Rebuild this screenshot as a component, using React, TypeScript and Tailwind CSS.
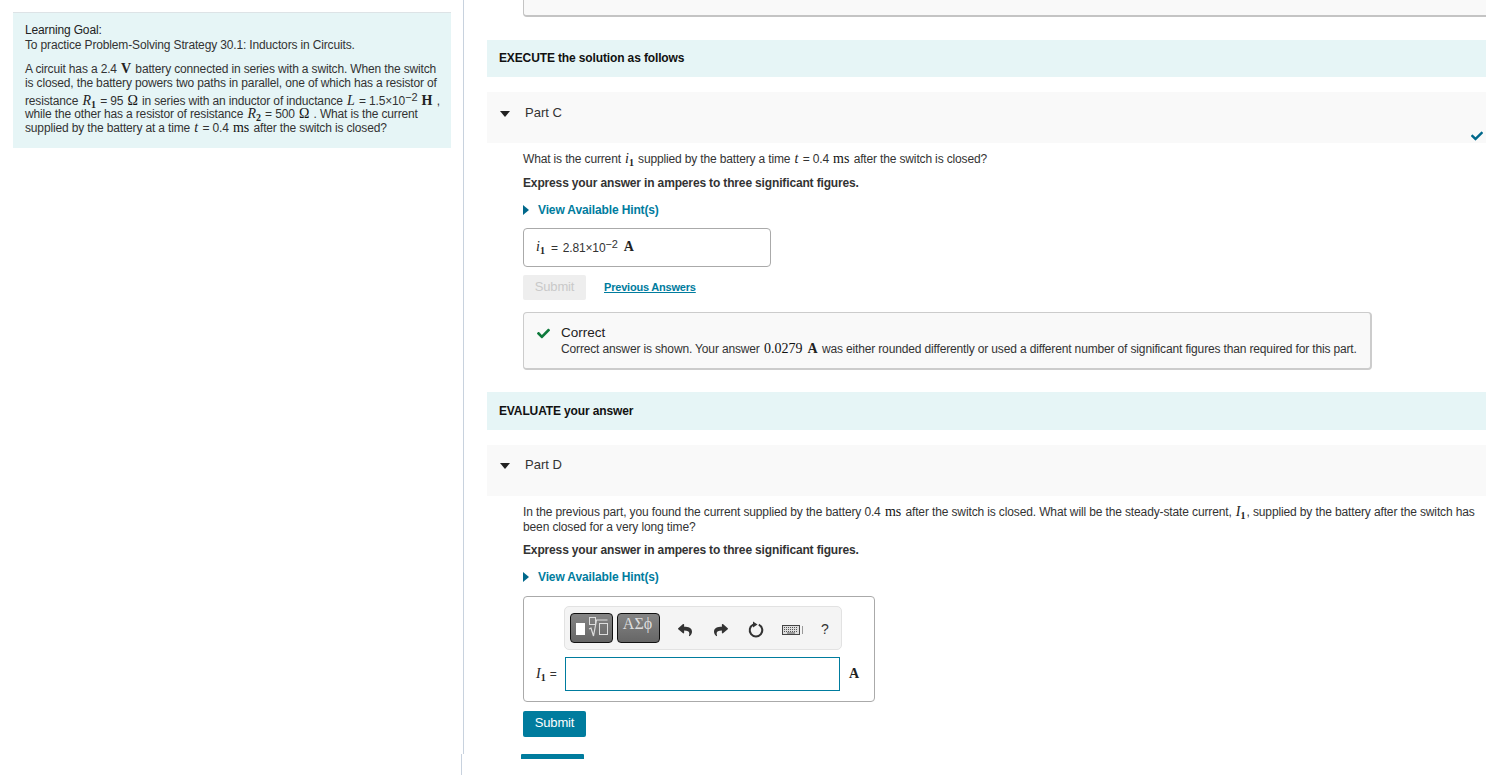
import React from 'react';
import { FaCheck, FaReply, FaShare } from 'react-icons/fa';

const V: React.FC<{ children: React.ReactNode }> = ({ children }) => (
    <span className="mx-px font-['Liberation_Serif',serif] italic text-[14px] leading-none tracking-normal text-[#222]">{children}</span>
);

// bold unit letters (V, H, A)
const U: React.FC<{ children: React.ReactNode }> = ({ children }) => (
    <span className="mx-px font-['Liberation_Serif',serif] text-[14px] leading-none tracking-normal font-bold text-[#222]">{children}</span>
);

// lighter units and numbers (ms, Ω, 0.0279)
const R: React.FC<{ children: React.ReactNode }> = ({ children }) => (
    <span className="mx-px font-['Liberation_Serif',serif] text-[14px] leading-none tracking-normal text-[#111]">{children}</span>
);

const Sub: React.FC<{ children: React.ReactNode }> = ({ children }) => (
    <span className="font-['Liberation_Serif',serif] text-[10px] font-bold not-italic align-[-3px] leading-none">{children}</span>
);

const Sup: React.FC<{ children: React.ReactNode }> = ({ children }) => (
    <span className="text-[11px] align-[4px] leading-none">{children}</span>
);

const Band: React.FC<{ title: string; className: string }> = ({ title, className }) => (
    <div className={`flex items-center pl-3 bg-[#e6f5f6] text-[12px] tracking-[-0.13px] font-bold text-[#111] ${className}`}>{title}</div>
);

const PartHeader: React.FC<{ title: string; done?: boolean; className: string }> = ({ title, done, className }) => (
    <div className={`relative flex items-start h-[51px] bg-[#f9f9f9] pl-[13px] text-[#333] ${className}`}>
        <svg width="10" height="6" viewBox="0 0 10 6" className="mt-[7px] mr-[15px]">
            <path d="M0 0h10L5 6z" fill="#222" />
        </svg>
        <span className="text-[13px] tracking-normal leading-[17px]">{title}</span>
        {done && <FaCheck className="absolute right-[3px] bottom-[1px] w-3 h-3 text-[#00688b]" />}
    </div>
);

const Hint: React.FC<{ className: string }> = ({ className }) => (
    <div className={`flex items-center text-[12px] tracking-[-0.13px] leading-[14px] font-bold text-[#007c9e] ${className}`}>
        <svg width="6" height="10" viewBox="0 0 6 10" className="mr-[9px]">
            <path d="M0 0l6 5-6 5z" fill="#00688b" />
        </svg>
        View Available Hint(s)
    </div>
);

const KeyboardIcon = () => (
    <svg width="18" height="10" viewBox="0 0 18 10">
        <rect x="0.5" y="0.5" width="17" height="9" fill="#ddd" stroke="#444" />
        <path d="M2 2.5h14M2 4.5h14M2 6.5h14" stroke="#555" strokeWidth="1" strokeDasharray="1 1" />
        <path d="M5 8h8" stroke="#555" />
    </svg>
);

const TemplateIcon = () => (
    <svg width="43" height="30" viewBox="0 0 43 30">
        <rect x="5" y="9" width="9" height="12" fill="#fff" />
        <rect x="18.5" y="3.5" width="6" height="7" fill="none" stroke="#ddd" />
        <path d="M18 15l2-1 2.5 8 3-16h11" fill="none" stroke="#ddd" strokeWidth="1.2" />
        <rect x="28.5" y="9.5" width="8" height="11" fill="none" stroke="#ddd" />
    </svg>
);

const ResetIcon = () => (
    <svg width="16" height="17" viewBox="0 0 16 17">
        <path d="M10.8 3.6A6.3 6.3 0 1 1 5.2 3.6" fill="none" stroke="#333" strokeWidth="2" />
        <path d="M5 0.5l4.5 3L5 6.5z" fill="#333" />
    </svg>
);

export default function App() {
    return (
        <div className="flex h-[775px] w-[1486px] overflow-hidden bg-white font-['Liberation_Sans',Arial,sans-serif] text-[12px] tracking-[-0.15px] text-[#333]">
            <div className="flex flex-col w-[464px] shrink-0">
                <div className="h-[754px] border-r border-[#c8d2de] pt-3 pl-[13px] pr-3">
                    <div className="w-[438px] h-[136px] bg-[#e6f5f6] border-t border-[#dde3e6] pl-3 pt-[10px] leading-[14px]">
                        <div className="text-[#222] h-[15px]">Learning Goal:</div>
                        <div className="h-[14px]">To practice Problem-Solving Strategy 30.1: Inductors in Circuits.</div>
                        <div className="mt-[10px] h-[14px] whitespace-nowrap">A circuit has a 2.4 <U>V</U> battery connected in series with a switch. When the switch</div>
                        <div className="h-[14px] whitespace-nowrap">is closed, the battery powers two paths in parallel, one of which has a resistor of</div>
                        <div className="mt-[2px] h-[14px] whitespace-nowrap">resistance <V>R<Sub>1</Sub></V> = 95 <R>Ω</R> in series with an inductor of inductance <V>L</V> = 1.5×10<Sup>−2</Sup> <U>H</U> ,</div>
                        <div className="mt-px h-[14px] whitespace-nowrap">while the other has a resistor of resistance <V>R<Sub>2</Sub></V> = 500 <R>Ω</R> . What is the current</div>
                        <div className="h-[14px] whitespace-nowrap">supplied by the battery at a time <V>t</V> = 0.4 <R>ms</R> after the switch is closed?</div>
                    </div>
                </div>
                <div className="h-[21px] w-[462px] border-r border-[#c8d2de]" />
            </div>

            <div className="flex-1 min-w-0 pl-[23px]">
                <div className="ml-9 h-[17px] bg-[#f9f9f9] border-l border-b-2 border-[#c4c4c4] rounded-bl-[4px]" />
                <Band title="EXECUTE the solution as follows" className="mt-[23px] h-[37px] pb-[2px]" />
                <PartHeader title="Part C" done className="mt-[15px] pt-[12px]" />

                <div className="pl-9">
                    <p className="mt-[9px] leading-[14px]">What is the current <V>i<Sub>1</Sub></V> supplied by the battery a time <V>t</V> = 0.4 <R>ms</R> after the switch is closed?</p>
                    <p className="mt-2 leading-[14px] font-bold text-[#333]">Express your answer in amperes to three significant figures.</p>
                    <Hint className="mt-[13px]" />
                    <div className="mt-[11px] flex items-center w-[248px] h-[39px] border border-[#aaa] rounded-[4px] pl-[11px] bg-white">
                        <V>i<Sub>1</Sub></V>
                        <span className="ml-[5px]">=</span>
                        <span className="ml-[5px]">2.81×10<Sup>−2</Sup></span>
                        <span className="ml-[5px] -mt-[2px]"><U>A</U></span>
                    </div>
                    <div className="mt-2 flex items-center">
                        <div className="flex items-center justify-center w-[63px] h-[25px] pb-[2px] bg-[#eeeeee] rounded-[2px] text-[13px] text-[#c9c9c9]">Submit</div>
                        <a className="ml-[18px] text-[11px] tracking-[-0.2px] font-bold text-[#007c9e] underline">Previous Answers</a>
                    </div>
                    <div className="mt-3 w-[849px] h-[58px] flex bg-[#f9f9f9] border border-[#ccc] border-r-2 border-b-2 rounded-[4px] pl-[13px] pt-[12px]">
                        <FaCheck className="mt-[2px] w-[13px] h-[13px] text-[#0f7a3c]" />
                        <div className="ml-[11px]">
                            <div className="text-[13.5px] tracking-normal leading-[16px] text-[#222]">Correct</div>
                            <div className="text-[12px] leading-[16px] whitespace-nowrap">Correct answer is shown. Your answer <R>0.0279</R> <U>A</U> was either rounded differently or used a different number of significant figures than required for this part.</div>
                        </div>
                    </div>
                </div>

                <Band title="EVALUATE your answer" className="mt-[22px] h-[38px]" />
                <PartHeader title="Part D" className="mt-[15px] pt-[11px]" />

                <div className="pl-9">
                    <div className="mt-[9px] tracking-[-0.13px] leading-[15px]">
                        <div className="h-[15px] whitespace-nowrap">In the previous part, you found the current supplied by the battery 0.4 <R>ms</R> after the switch is closed. What will be the steady-state current, <V>I<Sub>1</Sub></V>, supplied by the battery after the switch has</div>
                        <div className="h-[15px] whitespace-nowrap">been closed for a very long time?</div>
                    </div>
                    <p className="mt-2 leading-[14px] font-bold">Express your answer in amperes to three significant figures.</p>
                    <Hint className="mt-[13px]" />
                    <div className="mt-[12px] w-[352px] h-[106px] border border-[#aaa] rounded-[4px] px-[11px] pt-[9px]">
                        <div className="ml-[29px] w-[278px] h-[44px] flex items-center bg-[#f4f4f4] border border-[#e2e2e2] rounded-[5px] pl-[5px]">
                            <button className="w-[43px] h-[30px] rounded-[4px] border border-[#111] bg-linear-to-b from-[#858585] to-[#666] overflow-hidden"><TemplateIcon /></button>
                            <button className="ml-1 w-[43px] h-[30px] pb-[8px] pr-[2px] rounded-[4px] border border-[#111] bg-linear-to-b from-[#858585] to-[#666] font-['Liberation_Serif',serif] text-[16px] tracking-normal leading-[20px] text-[#ddd]">ΑΣϕ</button>
                            <FaReply className="ml-[18px] mt-[3px] w-[14px] h-[14px] text-[#333]" />
                            <FaShare className="ml-[22px] mt-[3px] w-[14px] h-[14px] text-[#333]" />
                            <span className="ml-[20px] mt-[3px] flex items-center"><ResetIcon /></span>
                            <span className="ml-[18px] mt-[3px] flex items-center"><KeyboardIcon /></span>
                            <span className="ml-[2px] mt-[3px] h-[8px] w-px bg-[#999]" />
                            <span className="ml-[18px] mt-[3px] text-[14px] text-[#333]">?</span>
                        </div>
                        <div className="mt-[7px] flex items-center">
                            <span className="w-[30px] shrink-0 whitespace-nowrap"><V>I<Sub>1</Sub></V> =</span>
                            <div className="w-[275px] h-[34px] border border-[#007c9e] bg-white" />
                            <span className="ml-[8px]"><U>A</U></span>
                        </div>
                    </div>
                    <button className="mt-[9px] block w-[63px] h-[26px] pb-[2px] bg-[#007c9e] rounded-[2px] text-[13px] text-white">Submit</button>
                    <div className="mt-[17px] -ml-[2px] w-[63px] h-[5px] bg-[#007c9e] rounded-t-[1px]" />
                </div>
            </div>
        </div>
    );
}
